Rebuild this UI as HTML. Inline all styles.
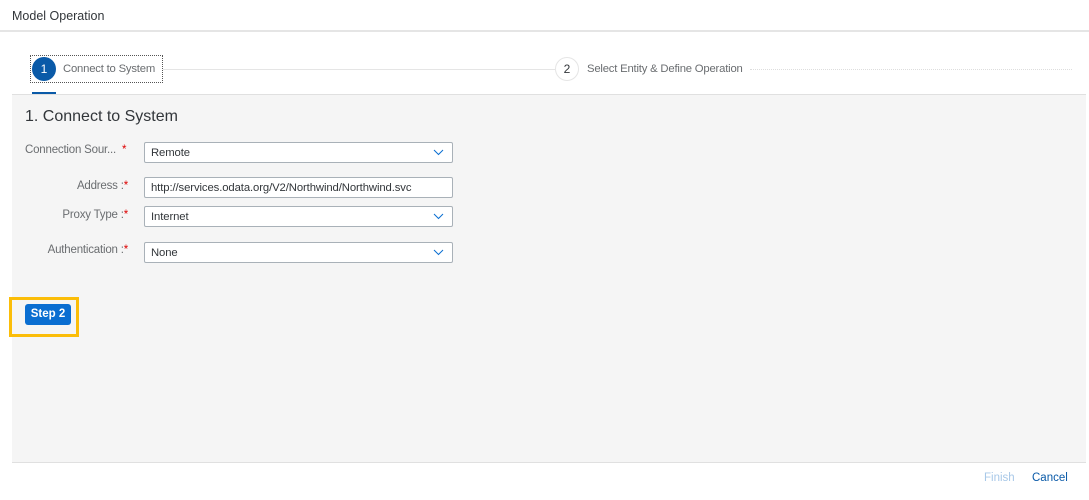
<!DOCTYPE html><html><head><style>
body{margin:0;width:1089px;height:500px;background:#fff;font-family:"Liberation Sans",sans-serif;position:relative;overflow:hidden;color:#32363a}
.a{position:absolute}
.lbl{position:absolute;font-size:11.5px;color:#6a6d70;text-align:right;width:118px;left:10px;letter-spacing:-0.2px}
.lbl b{color:#d00;font-weight:normal}
.inp{position:absolute;left:144px;height:21px;border:1px solid #a9b1b8;background:#fff;border-radius:2px;font-size:11.3px;line-height:20px;padding-left:6px;box-sizing:border-box;width:309px;color:#32363a;letter-spacing:-0.1px}
.chev{position:absolute;right:8px;top:6px}
</style></head><body>
<div class="a" style="left:12px;top:9px;font-size:12.5px;color:#32363a">Model Operation</div>
<div class="a" style="left:0;top:30px;width:1089px;height:2px;background:#e5e5e5"></div>
<div class="a" style="left:161px;top:69px;width:394px;height:1px;background:#e5e5e5"></div>
<div class="a" style="left:750px;top:69px;width:322px;border-top:1px dotted #ddd"></div>
<div class="a" style="left:30px;top:55px;width:133px;height:28px;border:1px dotted #555;box-sizing:border-box;background:#fff"></div>
<div class="a" style="left:32px;top:57px;width:24px;height:24px;border-radius:50%;background:#0a5aa8;color:#fff;font-size:12px;text-align:center;line-height:24px">1</div>
<div class="a" style="left:63px;top:63px;font-size:11.3px;line-height:13px;color:#6a6d70;letter-spacing:-0.2px">Connect to System</div>
<div class="a" style="left:555px;top:57px;width:24px;height:24px;border-radius:50%;border:1px solid #e5e5e5;box-sizing:border-box;color:#32363a;font-size:12px;text-align:center;line-height:22px;background:#fff">2</div>
<div class="a" style="left:587px;top:63px;font-size:11.3px;line-height:13px;color:#6a6d70;letter-spacing:-0.2px;background:#fff;padding-right:6px">Select Entity &amp; Define Operation</div>
<div class="a" style="left:32px;top:92px;width:24px;height:2px;background:#0a5aa8"></div>
<div class="a" style="left:12px;top:94px;width:1074px;height:367px;background:#f5f5f5;border-top:1px solid #e0e0e0;border-bottom:1px solid #e0e0e0"></div>
<div class="a" style="left:25px;top:108px;font-size:16px;color:#32363a">1. Connect to System</div>
<div class="lbl" style="top:144px;text-align:left;left:25px">Connection Sour... &nbsp;<b>*</b></div>
<div class="inp" style="top:142px">Remote<svg class="chev" width="11" height="7"><path d="M1 1l4.5 4.5L10 1" stroke="#0a6ed1" fill="none"/></svg></div>
<div class="lbl" style="top:180px">Address :<b>*</b></div>
<div class="inp" style="top:177px">http://services.odata.org/V2/Northwind/Northwind.svc</div>
<div class="lbl" style="top:209px">Proxy Type :<b>*</b></div>
<div class="inp" style="top:206px">Internet<svg class="chev" width="11" height="7"><path d="M1 1l4.5 4.5L10 1" stroke="#0a6ed1" fill="none"/></svg></div>
<div class="lbl" style="top:244px">Authentication :<b>*</b></div>
<div class="inp" style="top:242px">None<svg class="chev" width="11" height="7"><path d="M1 1l4.5 4.5L10 1" stroke="#0a6ed1" fill="none"/></svg></div>
<div class="a" style="left:9px;top:297px;width:70px;height:40px;border:3px solid #fbbd08;box-sizing:border-box"></div>
<div class="a" style="left:25px;top:304px;width:46px;height:21px;background:#0a6ed1;border-radius:3px;color:#fff;font-size:11.5px;font-weight:bold;text-align:center;line-height:21px">Step 2</div>
<div class="a" style="left:984px;top:472px;font-size:11.5px;color:#a8c8e8">Finish</div>
<div class="a" style="left:1032px;top:472px;font-size:11.5px;color:#0a5aa8">Cancel</div>
</body></html>
